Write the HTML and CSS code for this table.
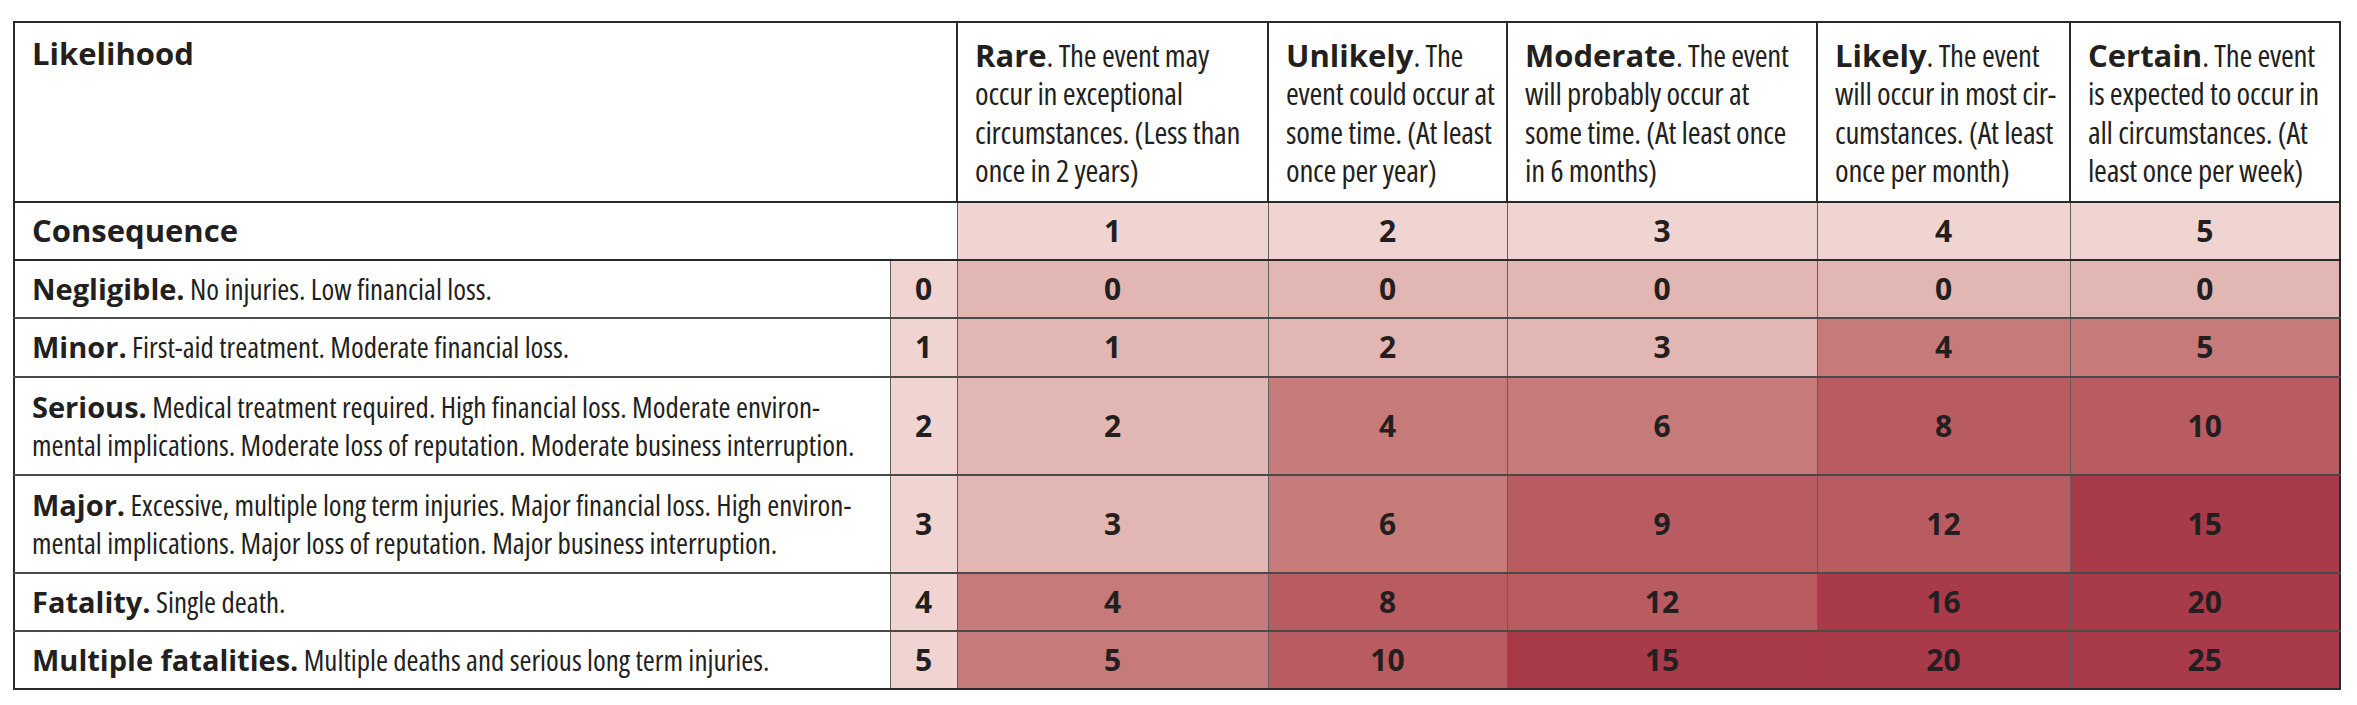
FILE: index.html
```html
<!DOCTYPE html>
<html lang="en">
<head>
<meta charset="utf-8">
<title>Risk matrix</title>
<link rel="stylesheet" href="styles.css">
</head>
<body>
<div class="page">
<table class="matrix">
  <colgroup>
    <col class="c-label"><col class="c-idx"><col class="c-rare"><col class="c-unlikely"><col class="c-moderate"><col class="c-likely"><col class="c-certain">
  </colgroup>
  <thead>
    <tr class="row-head">
      <th colspan="2" class="title">Likelihood</th>
      <th class="desc"><b>Rare</b>. The event may<br>occur in exceptional<br>circumstances. (Less than<br>once in 2 years)</th>
      <th class="desc"><b>Unlikely</b>. The<br>event could occur at<br>some time. (At least<br>once per year)</th>
      <th class="desc"><b>Moderate</b>. The event<br>will probably occur at<br>some time. (At least once<br>in 6 months)</th>
      <th class="desc"><b>Likely</b>. The event<br>will occur in most cir-<br>cumstances. (At least<br>once per month)</th>
      <th class="desc"><b>Certain</b>. The event<br>is expected to occur in<br>all circumstances. (At<br>least once per week)</th>
    </tr>
  </thead>
  <tbody>
    <tr class="row-conseq">
      <th colspan="2" class="title">Consequence</th>
      <td class="num l0">1</td><td class="num l0">2</td><td class="num l0">3</td><td class="num l0">4</td><td class="num l0">5</td>
    </tr>
    <tr class="row-1">
      <th class="label"><b>Negligible.</b> No injuries. Low financial loss.</th>
      <td class="num idx">0</td>
      <td class="num l1">0</td><td class="num l1">0</td><td class="num l1">0</td><td class="num l1">0</td><td class="num l1">0</td>
    </tr>
    <tr class="row-1b">
      <th class="label"><b>Minor.</b> First-aid treatment. Moderate financial loss.</th>
      <td class="num idx">1</td>
      <td class="num l1">1</td><td class="num l1">2</td><td class="num l1">3</td><td class="num l2">4</td><td class="num l2">5</td>
    </tr>
    <tr class="row-2">
      <th class="label"><b>Serious.</b> Medical treatment required. High financial loss. Moderate environ-<br>mental implications. Moderate loss of reputation. Moderate business interruption.</th>
      <td class="num idx">2</td>
      <td class="num l1">2</td><td class="num l2">4</td><td class="num l2">6</td><td class="num l3">8</td><td class="num l3">10</td>
    </tr>
    <tr class="row-2">
      <th class="label"><b>Major.</b> Excessive, multiple long term injuries. Major financial loss. High environ-<br>mental implications. Major loss of reputation. Major business interruption.</th>
      <td class="num idx">3</td>
      <td class="num l1">3</td><td class="num l2">6</td><td class="num l3">9</td><td class="num l3">12</td><td class="num l4">15</td>
    </tr>
    <tr class="row-1">
      <th class="label"><b>Fatality.</b> Single death.</th>
      <td class="num idx">4</td>
      <td class="num l2">4</td><td class="num l3">8</td><td class="num l3">12</td><td class="num l4">16</td><td class="num l4">20</td>
    </tr>
    <tr class="row-1">
      <th class="label"><b>Multiple fatalities.</b> Multiple deaths and serious long term injuries.</th>
      <td class="num idx">5</td>
      <td class="num l2">5</td><td class="num l3">10</td><td class="num l4">15</td><td class="num l4">20</td><td class="num l4">25</td>
    </tr>
  </tbody>
</table>
</div>
</body>
</html>
```
FILE: styles.css
```css
html, body {
  margin: 0;
  background: #ffffff;
}

.page {
  padding: 21px 0 0 13px;
}

.matrix {
  border-collapse: collapse;
  table-layout: fixed;
  width: 2326px;
  font-family: "Open Sans", "Liberation Sans", sans-serif;
  font-stretch: 75%;
  font-size: 30px;
  line-height: 38.4px;
  color: #231f20;
  border: 2px solid #2a2a2a;
}

.c-label { width: 876px; }
.c-idx { width: 67px; }
.c-rare { width: 311px; }
.c-unlikely { width: 239px; }
.c-moderate { width: 310px; }
.c-likely { width: 253px; }
.c-certain { width: 270px; }

.matrix th,
.matrix td {
  padding: 0 17px;
  text-align: left;
  font-weight: 400;
  white-space: nowrap;
  border: 1px solid #5e5e5e;
  border-top: 2px solid #4a4a4a;
}

.matrix b {
  font-weight: 700;
  font-stretch: 100%;
  letter-spacing: 0;
}

.matrix .title {
  font-weight: 700;
  font-stretch: 93%;
  font-size: 31px;
}

.matrix .num {
  font-weight: 700;
  font-stretch: 100%;
  font-size: 30px;
  text-align: center;
  vertical-align: middle;
  padding: 0;
}

.row-head { height: 180px; }
.row-conseq { height: 58px; }
.row-1 { height: 58px; }
.row-1b { height: 59px; }
.row-2 { height: 98px; }

.row-head th {
  vertical-align: top;
  padding-top: 13px;
  border: 2px solid #2a2a2a;
}

.row-head .title {
  padding-top: 11px;
}

.row-head .desc {
  font-size: 31px;
  letter-spacing: -0.25px;
}

.row-head .desc b {
  font-stretch: 94%;
}

.row-conseq th,
.row-conseq td {
  border-bottom: 2px solid #2a2a2a;
}

.row-conseq .title {
  vertical-align: middle;
  padding-bottom: 2px;
  border-right: 1px solid #5e5e5e;
}

.label {
  font-size: 29px;
  vertical-align: middle;
  padding-bottom: 3px;
}

.l0, .idx { background: #efd4d2; }
.l1 { background: #e2b7b3; }
.l2 { background: #c67a79; }
.l3 { background: #b95c61; }
.l4 { background: #a83a4a; }
```
